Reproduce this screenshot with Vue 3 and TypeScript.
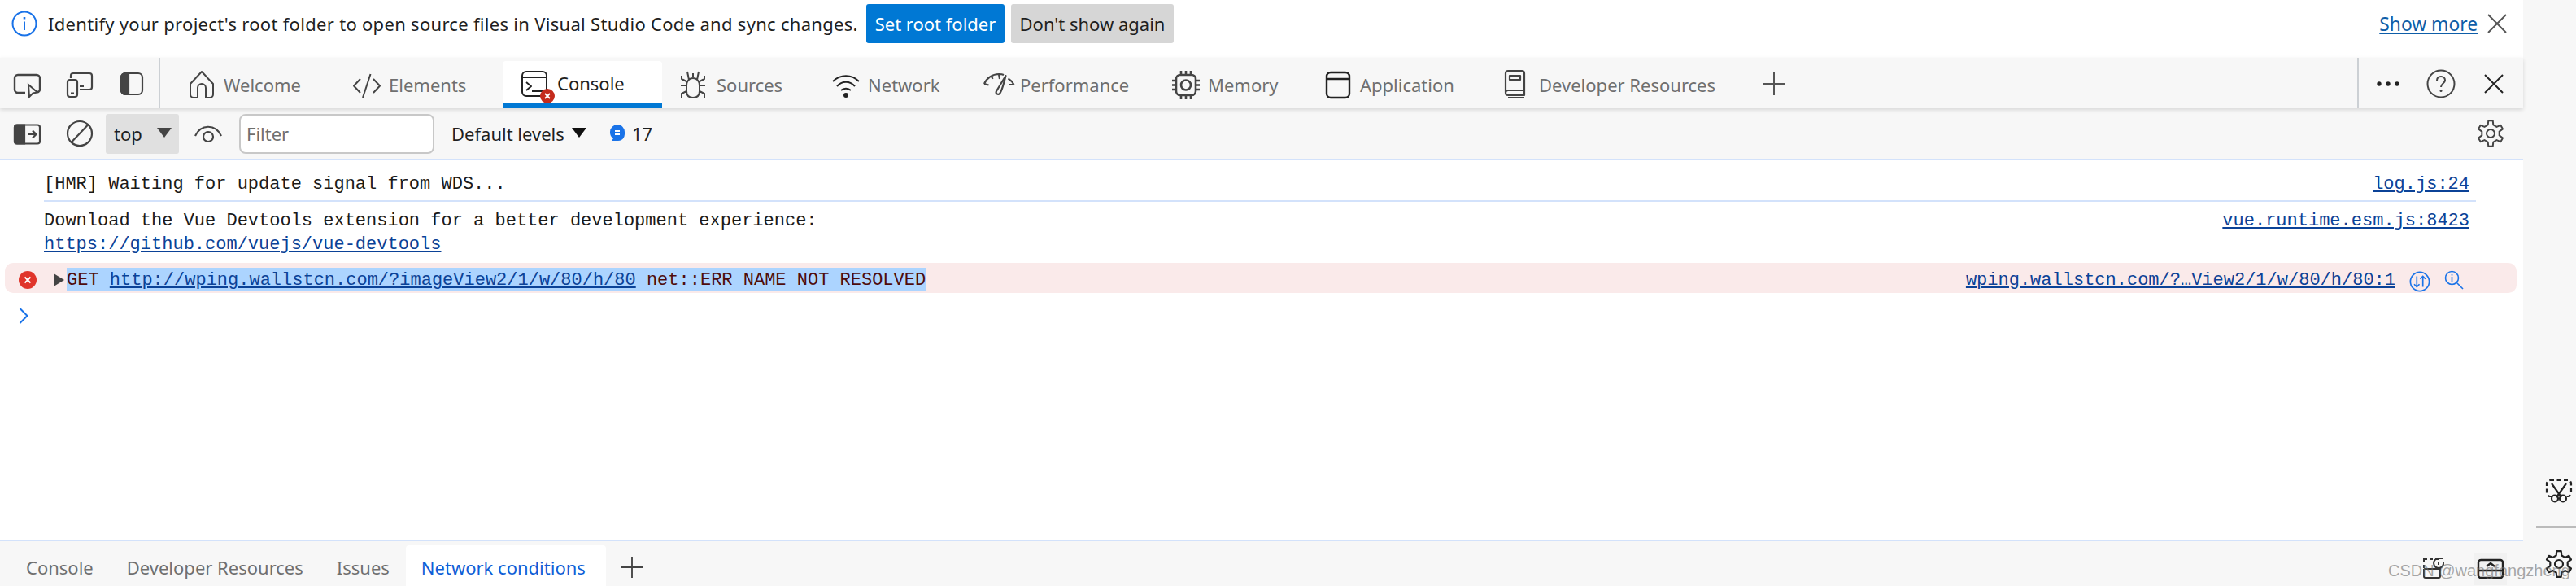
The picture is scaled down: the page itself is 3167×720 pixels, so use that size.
<script setup lang="ts">
type Shape = { d: string; f?: string; s?: string; w?: number }

const circle = (cx: number, cy: number, r: number) =>
  `M${cx - r} ${cy}a${r} ${r} 0 1 0 ${r * 2} 0a${r} ${r} 0 1 0 ${-r * 2} 0Z`

function cog(cx: number, cy: number, outer: number, inner: number): string {
  const pts: string[] = []
  for (let i = 0; i < 6; i++) {
    const a = (i * Math.PI) / 3 - Math.PI / 2
    const spread = [-0.3, -0.17, 0.17, 0.3]
    const radii = [inner, outer, outer, inner]
    spread.forEach((s, k) => {
      pts.push(`${(cx + radii[k] * Math.cos(a + s)).toFixed(1)} ${(cy + radii[k] * Math.sin(a + s)).toFixed(1)}`)
    })
  }
  return 'M' + pts.join('L') + 'Z' + circle(cx, cy, 5)
}

const DARK = '#444'

const home: Shape[] = [{ d: 'M2 17L16 2L30 17V30a4 4 0 0 1-4 4H21V22a5 5 0 0 0-10 0V34H6a4 4 0 0 1-4-4Z' }]
const elements: Shape[] = [{ d: 'M10 11L2 19.5L10 28M22.5 5L13 34M26 11L34 19.5L26 28' }]
const consoleIcon: Shape[] = [
  { d: 'M7 4H27a5 5 0 0 1 5 5V29a5 5 0 0 1-5 5H7a5 5 0 0 1-5-5V9a5 5 0 0 1 5-5ZM2 11H32M7 17L13 22L7 27M14 28H28', s: '#222' },
  { d: circle(33, 34, 9), f: '#c42b1c', s: 'none' },
  { d: 'M30 31L36 37M36 31L30 37', s: '#fff', w: 1.8 }
]
const bug: Shape[] = [
  { d: 'M16 10c5 0 8 4 8 9v7c0 5-3 8-8 8s-8-3-8-8v-7c0-5 3-9 8-9ZM9 2L11 12M23 2L21 12M16 4V9M8 19H1M24 19H31M8 26L2 29V34M24 26L30 29V34M8 14L2 11V7M24 14L30 11V7' }
]
const wifi: Shape[] = [
  { d: 'M2 14C11 5 25 5 34 14M7 20C13 13 23 13 29 20M12 25C15 22 21 22 24 25', s: '#222' },
  { d: circle(18, 31, 3), f: '#222', s: 'none' }
]
const perf: Shape[] = [
  { d: 'M1 17C4 10 11 5 19 5C22 5 24 5.500 25 6M30.500 10.500C33 12 36 15 37.500 18M1 17L6.500 18.500M9.500 7L11.500 11M19 5L20 11M31 18H37.500', w: 2.2 },
  { d: 'M27.500 7L16 26c-1.500 3 2 5 4 3c2-2 4-8 7.500-22Z', w: 2.2 }
]
const chip: Shape[] = [
  { d: 'M11 6H25a5 5 0 0 1 5 5V26a5 5 0 0 1-5 5H11a5 5 0 0 1-5-5V11a5 5 0 0 1 5-5ZM12 1V6M18 1V6M24 1V6M12 31V36M18 31V36M24 31V36M1 13H6M1 18.500H6M1 24H6M30 13H35M30 18.500H35M30 24H35', w: 2.6 },
  { d: circle(18, 18.5, 6), w: 2.6 }
]
const app: Shape[] = [{ d: 'M7 3H25a5 5 0 0 1 5 5V29a5 5 0 0 1-5 5H7a5 5 0 0 1-5-5V8a5 5 0 0 1 5-5ZM2 11H30', s: '#222', w: 2.4 }]
const book: Shape[] = [
  { d: 'M5 1H22a3 3 0 0 1 3 3V31H5a3 3 0 0 1-3-3V4a3 3 0 0 1 3-3ZM2 28a3 3 0 0 1 3-3H25M5 34H25M7 7H20V12H7Z', w: 2.2 }
]

const tabs = [
  { name: 'Welcome', icon: home, tight: true },
  { name: 'Elements', icon: elements },
  { name: 'Console', icon: consoleIcon, active: true },
  { name: 'Sources', icon: bug },
  { name: 'Network', icon: wifi },
  { name: 'Performance', icon: perf },
  { name: 'Memory', icon: chip },
  { name: 'Application', icon: app, tight: true },
  { name: 'Developer Resources', icon: book, tight: true }
]

const lower = ['Console', 'Developer Resources', 'Issues']
const gearBig = cog(18, 18, 16, 11)
</script>

<template>
  <div class="page">
    <div class="main">
      <header class="infobar">
        <svg class="ic30" viewBox="0 0 32 32" fill="none" stroke="#1a73e8" stroke-width="2">
          <circle cx="16" cy="16" r="14.500" />
          <path d="M16 13.500V24" />
          <path d="M16 8v2.500" stroke-width="2.600" />
        </svg>
        <span class="info-text">Identify your project's root folder to open source files in Visual Studio Code and sync changes.</span>
        <button class="btn primary">Set root folder</button>
        <button class="btn plain">Don't show again</button>
        <a class="more">Show more</a>
        <svg class="close-a" viewBox="0 0 24 24" fill="none" stroke="#555" stroke-width="2"><path d="M1 1L23 23M23 1L1 23" /></svg>
      </header>

      <nav class="toolbar">
        <div class="tools">
          <svg class="ic36" viewBox="0 0 36 36" fill="none" :stroke="DARK" stroke-width="2.400">
            <path d="M15 28H6a4 4 0 0 1-4-4V10a4 4 0 0 1 4-4H29a4 4 0 0 1 4 4V24a3 3 0 0 1-3 3" />
            <path d="M19 18L30 27.500L24.500 28.500L20 33Z" stroke-width="2" />
          </svg>
          <svg class="ic36" viewBox="0 0 36 36" fill="none" :stroke="DARK" stroke-width="2.200">
            <path d="M7 10V7a3 3 0 0 1 3-3H30a3 3 0 0 1 3 3V21a3 3 0 0 1-3 3H18" />
            <rect x="3" y="12" width="12" height="21" rx="3" />
            <path d="M18 20H23M7 28.500H11" />
          </svg>
          <svg class="ic30b" viewBox="0 0 30 30" fill="none" :stroke="DARK" stroke-width="2.200">
            <rect x="5" y="1" width="26" height="26" rx="5" />
            <path d="M10 1H14V27H10a5 5 0 0 1-5-5V6a5 5 0 0 1 5-5Z" :fill="DARK" />
          </svg>
        </div>
        <div class="tabs">
          <div v-for="t in tabs" :key="t.name" class="tab" :class="{ active: t.active, tight: t.tight }">
            <svg class="ic36 tab-ic" viewBox="0 0 36 36" fill="none">
              <path
                v-for="(p, i) in t.icon"
                :key="i"
                :d="p.d"
                :fill="p.f || 'none'"
                :stroke="p.s || DARK"
                :stroke-width="p.w || 2"
                stroke-linejoin="round"
              />
            </svg>
            <span>{{ t.name }}</span>
          </div>
          <svg class="plus" viewBox="0 0 30 30" fill="none" stroke="#555" stroke-width="2"><path d="M15 1V29M1 15H29" /></svg>
        </div>
        <div class="tb-right">
          <svg class="dots" viewBox="0 0 30 8" fill="#222"><circle cx="4" cy="4" r="2.700" /><circle cx="15" cy="4" r="2.700" /><circle cx="26" cy="4" r="2.700" /></svg>
          <svg class="help" viewBox="0 0 36 36" fill="none" stroke="#444" stroke-width="2">
            <circle cx="18" cy="18" r="16.500" />
            <path d="M13 14c0-3 2-5 5-5s5 2 5 4.500c0 4-5 4-5 8.500" />
            <circle cx="18" cy="26.500" r="1.500" fill="#444" stroke="none" />
          </svg>
          <svg class="close-b" viewBox="0 0 24 24" fill="none" stroke="#222" stroke-width="2"><path d="M1 1L23 23M23 1L1 23" /></svg>
        </div>
      </nav>

      <section class="filterbar">
        <svg class="ic36 f-exit" viewBox="0 0 36 36" fill="none" :stroke="DARK" stroke-width="2.200">
          <rect x="2" y="7.500" width="31" height="23" rx="3" />
          <path d="M5 7.500H14V30.500H5a3 3 0 0 1-3-3V10.500a3 3 0 0 1 3-3Z" :fill="DARK" />
          <path d="M18 19H28.500M24 14.500L28.500 19L24 23.500" />
        </svg>
        <svg class="ic36 f-block" viewBox="0 0 36 36" fill="none" :stroke="DARK" stroke-width="2.200">
          <circle cx="16" cy="18" r="15" />
          <path d="M26 7.500L6 28.500" />
        </svg>
        <div class="select">
          <span>top</span>
          <i class="tri dark"></i>
        </div>
        <svg class="eye" viewBox="0 0 34 22" fill="none" :stroke="DARK" stroke-width="2.200">
          <path d="M1 14C8 -1 26 -1 33 14" />
          <circle cx="17" cy="15" r="6" />
        </svg>
        <div class="filter">Filter</div>
        <div class="levels">Default levels</div>
        <i class="tri black"></i>
        <svg class="msg" viewBox="0 0 18 22"><path d="M9 0a9 9 0 0 1 9 9v3a8 8 0 0 1-8 8H2l2-3a9 9 0 0 1-4-8a9 9 0 0 1 9-9Z" fill="#1a73e8" /><path d="M6 8H12M6 12H12" stroke="#fff" stroke-width="2" /></svg>
        <span class="count">17</span>
        <svg class="ic36 f-gear" viewBox="0 0 36 36" fill="none" stroke="#444" stroke-width="2" stroke-linejoin="round"><path :d="gearBig" /></svg>
      </section>

      <section class="console">
        <div class="row first">
          <span>[HMR] Waiting for update signal from WDS...</span>
          <a class="src">log.js:24</a>
        </div>
        <div class="row second">
          <div class="lines">
            <div>Download the Vue Devtools extension for a better development experience:</div>
            <a class="lnk">https://github.com/vuejs/vue-devtools</a>
          </div>
          <a class="src">vue.runtime.esm.js:8423</a>
        </div>
        <div class="err">
          <svg class="err-ic" viewBox="0 0 22 22"><circle cx="11" cy="11" r="11" fill="#e0352b" /><path d="M7.500 7.500L14.500 14.500M14.500 7.500L7.500 14.500" stroke="#fff" stroke-width="1.800" /></svg>
          <i class="expander"></i>
          <span class="sel">GET <a class="lnk">http://wping.wallstcn.com/?imageView2/1/w/80/h/80</a> net::ERR_NAME_NOT_RESOLVED</span>
          <a class="src err-src">wping.wallstcn.com/?…View2/1/w/80/h/80:1</a>
          <svg class="net-ic" viewBox="0 0 28 28" fill="none" stroke="#1a73e8" stroke-width="1.800">
            <circle cx="14" cy="14" r="12.500" />
            <path d="M10 7V21M6.500 17.500L10 21L13.500 17.500M18 21V7M14.500 10.500L18 7L21.500 10.500" />
          </svg>
          <svg class="search-ic" viewBox="0 0 24 24" fill="none" stroke="#1a73e8" stroke-width="1.600">
            <circle cx="9.500" cy="9.500" r="8" />
            <path d="M15 15L23 23M9.500 8V14M9.500 5V6.500" />
          </svg>
        </div>
        <svg class="prompt" viewBox="0 0 12 20" fill="none" stroke="#1a73e8" stroke-width="2"><path d="M1.500 1L10.500 10L1.500 19" /></svg>
      </section>

      <footer class="drawer">
        <span v-for="n in lower" :key="n" class="d-tab">{{ n }}</span>
        <span class="d-tab current">Network conditions</span>
        <svg class="d-plus" viewBox="0 0 30 30" fill="none" stroke="#444" stroke-width="2"><path d="M15 1V29M1 15H29" /></svg>
        <svg class="shot" viewBox="0 0 34 26" fill="none" stroke="#333" stroke-width="2">
          <path d="M2 2H20V14H2Z" stroke-dasharray="4 3" />
          <path d="M2 14V23a2 2 0 0 0 2 2H20a2 2 0 0 0 2-2V14H2M26 6a6 6 0 1 1-6 -5L26 1" />
        </svg>
        <div class="shot-tile">
          <svg viewBox="0 0 34 26" fill="none" stroke="#222" stroke-width="2.400">
            <rect x="2" y="2" width="30" height="22" rx="3" />
            <path d="M2 15H32M12 10L17 6L22 10" />
          </svg>
        </div>
      </footer>
    </div>

    <aside class="rail">
      <svg class="scissors" viewBox="0 0 34 34" fill="none" stroke="#222" stroke-width="2.200">
        <path d="M6 8H28a4 4 0 0 1 4 4V24a4 4 0 0 1-4 4H26M8 28H6a4 4 0 0 1-4-4V12a4 4 0 0 1 4-4" stroke-dasharray="5 3.500" />
        <path d="M8 12L20 29M26 12L14 29" />
        <circle cx="12" cy="30.500" r="4" />
        <circle cx="22" cy="30.500" r="4" />
      </svg>
      <div class="rail-line"></div>
      <svg class="rail-gear" viewBox="0 0 36 36" fill="none" stroke="#222" stroke-width="2.200" stroke-linejoin="round"><path :d="gearBig" /></svg>
    </aside>
    <div class="mark">CSDN @wangfangzheng</div>
  </div>
</template>

<style>
html, body { margin: 0; background: #fff; }
</style>

<style scoped>
.page {
  position: relative;
  display: flex;
  width: 3167px;
  height: 720px;
  overflow: hidden;
  background: #f7f7f7;
  font-family: "Noto Sans", "Liberation Sans", sans-serif;
  font-size: 22px;
  color: #1f1f1f;
}
.main {
  display: flex;
  flex-direction: column;
  width: 3102px;
  height: 720px;
}
svg { display: block; flex: none; overflow: visible; }
.ic36 { width: 36px; height: 36px; }
.ic30 { width: 32px; height: 32px; }
.ic30b { width: 30px; height: 30px; }

/* info bar */
.infobar {
  display: flex;
  align-items: center;
  height: 71px;
  padding: 0 20px 13px 14px;
  box-sizing: border-box;
  background: #fff;
}
.info-text { margin-left: 13px; white-space: nowrap; width: 1006px; letter-spacing: 0.3px; }
.btn {
  height: 48px;
  border: 0;
  border-radius: 3px;
  padding: 0;
  font: inherit;
  white-space: nowrap;
}
.primary { width: 170px; background: #0078d4; color: #fff; }
.plain { width: 200px; margin-left: 8px; background: #d6d6d6; color: #1f1f1f; }
.more { margin-left: auto; color: #0f5ea8; text-decoration: underline; font-size: 22.800px; }
.close-a { width: 24px; height: 24px; margin-left: 12px; }

/* main tabs */
.toolbar {
  position: relative;
  z-index: 2;
  display: flex;
  height: 62px;
  background: #f7f7f7;
  box-shadow: 0 2px 5px rgba(0, 0, 0, 0.13);
  flex: none;
}
.tools {
  display: flex;
  align-items: center;
  gap: 28px;
  width: 197px;
  padding: 3px 0 0 16px;
  box-sizing: border-box;
  border-right: 2px solid #ccd0d4;
}
.tabs {
  display: grid;
  grid-template-columns: 201px 207px 196px 186px 187px 231px 189px 220px 339px 30px;
  align-items: stretch;
  margin-left: 13px;
  border-right: 2px solid #ccd0d4;
  width: 2688px;
}
.tab {
  display: flex;
  align-items: center;
  gap: 9px;
  padding: 4px 0 0 22px;
  color: #6f6f6f;
  white-space: nowrap;
  box-sizing: border-box;
  height: 62px;
}
.tab.tight { gap: 7px; }
.tab.active {
  height: 58px;
  margin-top: 4px;
  border-radius: 4px 4px 0 0;
  background: #fff;
  border-bottom: 6px solid #0078d4;
  color: #1f1f1f;
  padding-top: 2px;
}
.plus { align-self: center; width: 30px; height: 30px; margin-top: 1px; }
.tb-right { display: flex; align-items: center; flex: 1; padding-top: 2px; }
.dots { width: 30px; height: 8px; margin-left: 21px; }
.help { width: 36px; height: 36px; margin-left: 32px; }
.close-b { width: 24px; height: 24px; margin-left: 35px; }

/* filter bar */
.filterbar {
  display: flex;
  align-items: center;
  height: 64px;
  box-sizing: border-box;
  flex: none;
  padding-left: 16px;
  background: #f7f7f7;
  border-bottom: 2px solid #d3e2fb;
}
.f-block { margin-left: 30px; }
.select {
  display: flex;
  align-items: center;
  width: 90px;
  height: 49px;
  margin-left: 12px;
  padding-left: 10px;
  box-sizing: border-box;
  border-radius: 3px;
  background: #e0e0e0;
}
.tri {
  width: 0;
  height: 0;
  border-left: 9px solid transparent;
  border-right: 9px solid transparent;
  border-top: 12px solid #444;
  margin-top: -2px;
}
.select .tri { margin-left: auto; margin-right: 9px; }
.eye { width: 34px; height: 22px; margin-left: 19px; }
.filter {
  width: 240px;
  height: 49px;
  margin-left: 21px;
  padding-left: 7px;
  box-sizing: border-box;
  border: 2px solid #c8c8c8;
  border-radius: 8px;
  background: #fff;
  color: #6f6f6f;
  line-height: 45px;
}
.levels { margin-left: 21px; width: 148px; white-space: nowrap; }
.tri.black { border-top-color: #111; }
.msg { width: 18px; height: 22px; margin-left: 29px; }
.count { margin-left: 9px; }
.f-gear { margin-left: auto; margin-right: 22px; }

/* console */
.console {
  flex: 1;
  background: #fff;
  border-bottom: 2px solid #d3e2fb;
  font-family: "Liberation Mono", monospace;
  font-size: 22px;
  line-height: 29px;
  color: #1a1a1a;
}
.row {
  display: flex;
  justify-content: space-between;
  margin: 0 58px 0 54px;
  padding-right: 8px;
}
.first {
  height: 51px;
  box-sizing: border-box;
  padding-top: 15px;
  border-bottom: 2px solid #d3e2fb;
}
.second { padding-top: 9px; }
.src, .lnk { color: #0b4297; text-decoration: underline; }
.err {
  display: flex;
  align-items: flex-start;
  height: 37px;
  box-sizing: border-box;
  margin: 8px 8px 0 6px;
  padding-top: 6px;
  border-radius: 10px;
  background: #faeaea;
  color: #4e0c0c;
  line-height: 32px;
  white-space: nowrap;
}
.err-ic { width: 22px; height: 22px; margin: 4px 0 0 17px; }
.expander {
  width: 0;
  height: 0;
  margin: 7px 0 0 21px;
  border-top: 8px solid transparent;
  border-bottom: 8px solid transparent;
  border-left: 13px solid #444;
}
.sel { display: block; height: 29px; margin-left: 3px; background: #acd4ff; }
.err-src { margin-left: auto; }
.net-ic { width: 26px; height: 26px; margin: 4px 0 0 17px; }
.search-ic { width: 24px; height: 24px; margin: 3px 65px 0 17px; }
.prompt { width: 12px; height: 20px; margin: 18px 0 0 23px; }

/* drawer */
.drawer {
  display: flex;
  align-items: flex-end;
  height: 55px;
  flex: none;
  padding-left: 32px;
  background: #f7f7f7;
  color: #6f6f6f;
}
.d-tab { height: 50px; line-height: 54px; margin-right: 41px; white-space: nowrap; }
.d-tab.current {
  width: 246px;
  box-sizing: border-box;
  margin: 0 0 0 -21px;
  padding-left: 19px;
  border-radius: 4px 4px 0 0;
  background: #fff;
  color: #0f5fd7;
}
.d-plus { width: 28px; height: 28px; margin: 0 0 9px 18px; }
.shot { width: 34px; height: 26px; margin: 0 0 9px auto; }
.shot-tile {
  display: flex;
  align-items: center;
  justify-content: center;
  width: 40px;
  height: 40px;
  margin: 0 20px 1px 30px;
  background: #f1f1f1;
}
.shot-tile svg { width: 34px; height: 26px; }

/* right rail */
.rail {
  display: flex;
  flex-direction: column;
  align-items: flex-end;
  flex: 1;
  justify-content: flex-end;
  padding: 0 0 9px;
}
.scissors { width: 34px; height: 34px; margin-right: 4px; }
.rail-line { width: 49px; height: 3px; margin: 30px 0 26px; background: #bbb; }
.rail-gear { width: 36px; height: 36px; margin-right: 3px; }

.mark {
  position: absolute;
  left: 2936px;
  top: 689px;
  font-family: "Liberation Sans", sans-serif;
  font-size: 20px;
  line-height: 24px;
  color: rgba(110, 110, 110, 0.6);
  white-space: nowrap;
}
</style>
